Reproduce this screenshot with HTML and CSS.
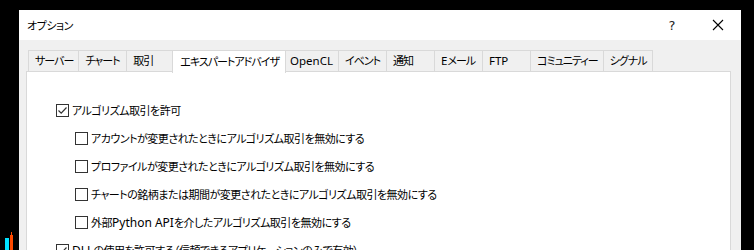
FILE: index.html
```html
<!DOCTYPE html>
<html lang="ja">
<head>
<meta charset="utf-8">
<link rel="stylesheet" href="styles.css">
</head>
<body>
<div class="desk">
  <div class="candle candle-cyan"></div>
  <div class="candle candle-orange"></div>
</div>
<div class="window">
  <div class="titlebar">
    <div class="title">オプション</div>
    <div class="tbtn">?</div>
    <div class="tbtn close">
      <svg width="12" height="12" viewBox="0 0 12 12"><path d="M1 1L11 11M11 1L1 11" stroke="#000" stroke-width="1.1" fill="none"/></svg>
    </div>
  </div>
  <div class="tabs">
    <div class="tab">サーバー</div>
    <div class="tab">チャート</div>
    <div class="tab">取引</div>
    <div class="tab active">エキスパートアドバイザ</div>
    <div class="tab"><span class="lat">OpenCL</span></div>
    <div class="tab">イベント</div>
    <div class="tab">通知</div>
    <div class="tab"><span class="lat">E</span>メール</div>
    <div class="tab"><span class="lat">FTP</span></div>
    <div class="tab">コミュニティー</div>
    <div class="tab">シグナル</div>
  </div>
  <div class="panel">
    <label class="row"><span class="cb checked"><svg width="11" height="11" viewBox="0 0 11 11"><path d="M1.5 5.5L4.2 8.2L9.5 2.5" stroke="#333" stroke-width="1.2" fill="none"/></svg></span>アルゴリズム取引を許可</label>
    <label class="row sub"><span class="cb"></span>アカウントが変更されたときにアルゴリズム取引を無効にする</label>
    <label class="row sub"><span class="cb"></span>プロファイルが変更されたときにアルゴリズム取引を無効にする</label>
    <label class="row sub"><span class="cb"></span>チャートの銘柄または期間が変更されたときにアルゴリズム取引を無効にする</label>
    <label class="row sub"><span class="cb"></span>外部<span class="lat">Python API</span>を介したアルゴリズム取引を無効にする</label>
    <label class="row"><span class="cb checked"><svg width="11" height="11" viewBox="0 0 11 11"><path d="M1.5 5.5L4.2 8.2L9.5 2.5" stroke="#333" stroke-width="1.2" fill="none"/></svg></span><span class="lat">DLL</span>の使用を許可する（信頼できるアプリケーションのみで有効）</label>
  </div>
</div>
</body>
</html>
```
FILE: styles.css
```css
html, body {
  margin: 0;
  padding: 0;
}
body {
  background: #000;
  width: 754px;
  height: 250px;
  overflow: hidden;
  position: relative;
  font-family: "Noto Sans CJK JP", "Noto Sans", sans-serif;
  font-size: 11px;
  letter-spacing: -0.5px;
  color: #000;
  font-feature-settings: "palt";
}
.lat {
  font-family: "Noto Sans", "Open Sans", sans-serif;
  font-size: 12px;
  letter-spacing: 0;
}
.tab .lat {
  font-size: 11.5px;
}
.desk {
  position: absolute;
  left: 0;
  top: 0;
  width: 19px;
  height: 250px;
}
.candle {
  position: absolute;
}
.candle-cyan {
  left: 5px;
  top: 238px;
  width: 4px;
  height: 12px;
  background: #00e1ff;
}
.candle-orange {
  left: 10px;
  top: 235px;
  width: 3px;
  height: 15px;
  background: #ff4a00;
}
.candle-orange::before {
  content: "";
  position: absolute;
  left: 1px;
  top: -3px;
  width: 1px;
  height: 3px;
  background: #ff4a00;
}
.window {
  margin-left: 19px;
  margin-top: 10px;
  width: 722px;
  height: 260px;
  background: #f0f0f0;
}
.titlebar {
  height: 30px;
  background: #fff;
  display: flex;
  align-items: center;
}
.title {
  flex: 1;
  padding-left: 8px;
  line-height: 30px;
}
.tbtn {
  width: 46px;
  height: 30px;
  display: flex;
  align-items: center;
  justify-content: center;
  font-family: "DejaVu Sans", sans-serif;
  font-size: 13px;
  color: #222;
  letter-spacing: 0;
}
.tabs {
  display: flex;
  align-items: flex-end;
  padding-left: 9px;
  margin-top: 9px;
  height: 23px;
  position: relative;
  z-index: 1;
}
.tab {
  box-sizing: border-box;
  height: 21px;
  min-width: 49px;
  padding: 0 5px 0 6px;
  border: 1px solid #d9d9d9;
  border-bottom: none;
  margin-right: -1px;
  background: #f0f0f0;
  line-height: 19px;
  white-space: nowrap;
  margin-bottom: 1px;
  letter-spacing: -1px;
}
.tab.active {
  height: 23px;
  background: #fff;
  margin-left: -2px;
  margin-right: -3px;
  padding: 0 6px 0 7px;
  margin-bottom: -1px;
  line-height: 21px;
  position: relative;
  z-index: 2;
}
.panel {
  margin-left: 7px;
  width: 705px;
  box-sizing: border-box;
  height: 200px;
  background: #fff;
  border: 1px solid #d9d9d9;
  margin-top: -1px;
  padding-top: 24px;
  padding-left: 29px;
}
.row {
  display: flex;
  align-items: center;
  height: 28px;
  white-space: nowrap;
}
.row.sub {
  padding-left: 19px;
}
.cb {
  box-sizing: border-box;
  width: 13px;
  height: 13px;
  border: 1px solid #333;
  background: #fff;
  margin-right: 3px;
  display: flex;
  align-items: center;
  justify-content: center;
  flex: none;
}
.cb svg {
  display: block;
}
```
